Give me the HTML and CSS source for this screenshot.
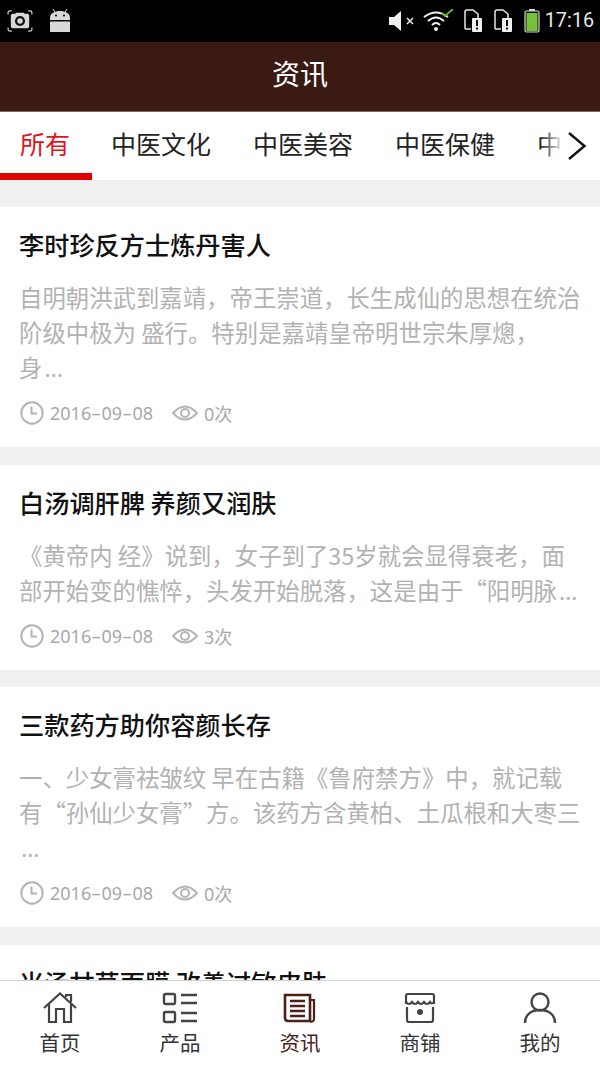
FILE: index.html
```html
<!DOCTYPE html>
<html lang="zh">
<head>
<meta charset="utf-8">
<title>资讯</title>
<link rel="stylesheet" href="styles.css">
</head>
<body>
<div class="app">
  <div class="status">
    <svg class="st-ic" width="26" height="22" viewBox="0 0 28 24"><g fill="none" stroke="#d8d8d8" stroke-width="1.300"><path d="M1 5V2.500Q1 1 3 1H5M23 1H25Q27 1 27 3V5M1 19V21Q1 23 3 23H5M23 23H25Q27 23 27 21V19"/></g><path d="M4 6Q4 4 6 4H9L10 3H18L19 4H22Q24 4 24 6V18Q24 20 22 20H6Q4 20 4 18Z" fill="#d8d8d8"/><circle cx="14" cy="12" r="5.500" fill="#111"/><circle cx="14" cy="12" r="3" fill="#d8d8d8"/></svg>
    <svg class="st-ic st-and" width="20" height="24" viewBox="0 0 20 24"><path d="M0 9C0 4 5 2 10 2S20 4 20 9V11H0Z" fill="#d8d8d8"/><path d="M3 0L5 3M17 0L15 3" stroke="#d8d8d8" stroke-width="1"/><circle cx="6" cy="6.500" r="1" fill="#000"/><circle cx="14" cy="6.500" r="1" fill="#000"/><rect y="12.500" width="20" height="10.500" fill="#d8d8d8"/></svg>
    <div class="st-right">
      <svg width="26" height="24" viewBox="0 0 26 24"><path d="M0 8H5L12 2V22L5 16H0Z" fill="#f0f0f0"/><path d="M18 9L24 15M24 9L18 15" stroke="#f0f0f0" stroke-width="1.500"/></svg>
      <svg class="st-wifi" width="32" height="24" viewBox="0 0 32 24"><g fill="none" stroke="#f0f0f0" stroke-width="2"><path d="M1 8Q13 -1 25 8"/><path d="M5 12Q13 5 21 12"/><path d="M9 16Q13 12 17 16"/></g><circle cx="13" cy="20" r="2" fill="#f0f0f0"/><path d="M19 4L22 7L30 0" fill="none" stroke="#5cb531" stroke-width="2"/></svg>
      <svg class="st-sim" width="20" height="24" viewBox="0 0 20 24"><path d="M1 20V3Q1 1 3 1H9L14 5V9" fill="none" stroke="#e8e8e8" stroke-width="1.500"/><path d="M1 20H7" stroke="#e8e8e8" stroke-width="1.500"/><rect x="8" y="9" width="10" height="14" rx="1" fill="#f0f0f0"/><rect x="12" y="11" width="2" height="6" fill="#111"/><rect x="12" y="18.500" width="2" height="2" fill="#111"/></svg>
      <svg class="st-sim" width="20" height="24" viewBox="0 0 20 24"><path d="M1 20V3Q1 1 3 1H9L14 5V9" fill="none" stroke="#e8e8e8" stroke-width="1.500"/><path d="M1 20H7" stroke="#e8e8e8" stroke-width="1.500"/><rect x="8" y="9" width="10" height="14" rx="1" fill="#f0f0f0"/><rect x="12" y="11" width="2" height="6" fill="#111"/><rect x="12" y="18.500" width="2" height="2" fill="#111"/></svg>
      <svg class="st-bat" width="16" height="24" viewBox="0 0 16 24"><rect x="5" y="0" width="6" height="3" fill="#d8d8d8"/><rect x="1" y="2" width="14" height="21" rx="1.500" fill="#111" stroke="#d8d8d8" stroke-width="1.200"/><rect x="2.500" y="4" width="11" height="18" fill="#74c23c"/></svg>
      <span class="st-time">17:16</span>
    </div>
  </div>
  <header class="top">资讯</header>
  <nav class="tabs">
    <span class="tab tab-on">所有</span>
    <span class="tab">中医文化</span>
    <span class="tab">中医美容</span>
    <span class="tab">中医保健</span>
    <span class="tab tab-cut">中</span>
    <div class="tab-more">
      <svg width="20" height="30" viewBox="0 0 20 30"><path d="M1 2L16.500 15L1 28" fill="none" stroke="#111" stroke-width="2.400"/></svg>
    </div>
  </nav>
  <main class="list">
    <article class="card">
      <h2 class="c-title">李时珍反方士炼丹害人</h2>
      <p class="c-text">自明朝洪武到嘉靖，帝王崇道，长生成仙的思想在统治<br>阶级中极为 盛行。特别是嘉靖皇帝明世宗朱厚熜，<br>身<span class="dots">…</span></p>
      <div class="c-meta">
        <svg class="m-clock" width="24" height="24" viewBox="0 0 24 24"><circle cx="12" cy="12" r="10.700" fill="none" stroke="#b4b4b4" stroke-width="2"/><path d="M11.500 5.500V12.500H17" fill="none" stroke="#b4b4b4" stroke-width="2"/></svg>
        <span class="m-date">2016<span class="dash">-</span>09<span class="dash">-</span>08</span>
        <svg class="m-eye" width="26" height="20" viewBox="0 0 26 20"><path d="M1 10Q13 -3 25 10Q13 23 1 10Z" fill="none" stroke="#b4b4b4" stroke-width="2"/><circle cx="13" cy="10" r="4" fill="none" stroke="#b4b4b4" stroke-width="2"/></svg>
        <span class="m-count">0次</span>
      </div>
    </article>
    <article class="card">
      <h2 class="c-title">白汤调肝脾 养颜又润肤</h2>
      <p class="c-text">《黄帝内 经》说到，女子到了35岁就会显得衰老，面<br>部开始变的憔悴，头发开始脱落，这是由于“阳明脉<span class="dots">…</span></p>
      <div class="c-meta">
        <svg class="m-clock" width="24" height="24" viewBox="0 0 24 24"><circle cx="12" cy="12" r="10.700" fill="none" stroke="#b4b4b4" stroke-width="2"/><path d="M11.500 5.500V12.500H17" fill="none" stroke="#b4b4b4" stroke-width="2"/></svg>
        <span class="m-date">2016<span class="dash">-</span>09<span class="dash">-</span>08</span>
        <svg class="m-eye" width="26" height="20" viewBox="0 0 26 20"><path d="M1 10Q13 -3 25 10Q13 23 1 10Z" fill="none" stroke="#b4b4b4" stroke-width="2"/><circle cx="13" cy="10" r="4" fill="none" stroke="#b4b4b4" stroke-width="2"/></svg>
        <span class="m-count">3次</span>
      </div>
    </article>
    <article class="card">
      <h2 class="c-title">三款药方助你容颜长存</h2>
      <p class="c-text">一、少女膏祛皱纹 早在古籍《鲁府禁方》中，就记载<br>有“孙仙少女膏”方。该药方含黄柏、土瓜根和大枣三<br><span class="dots">…</span></p>
      <div class="c-meta">
        <svg class="m-clock" width="24" height="24" viewBox="0 0 24 24"><circle cx="12" cy="12" r="10.700" fill="none" stroke="#b4b4b4" stroke-width="2"/><path d="M11.500 5.500V12.500H17" fill="none" stroke="#b4b4b4" stroke-width="2"/></svg>
        <span class="m-date">2016<span class="dash">-</span>09<span class="dash">-</span>08</span>
        <svg class="m-eye" width="26" height="20" viewBox="0 0 26 20"><path d="M1 10Q13 -3 25 10Q13 23 1 10Z" fill="none" stroke="#b4b4b4" stroke-width="2"/><circle cx="13" cy="10" r="4" fill="none" stroke="#b4b4b4" stroke-width="2"/></svg>
        <span class="m-count">0次</span>
      </div>
    </article>
    <article class="card">
      <h2 class="c-title">米汤甘草面膜 改善过敏皮肤</h2>
    </article>
  </main>
  <footer class="bar">
    <div class="b-item">
      <svg width="36" height="32" viewBox="0 0 36 32"><path d="M2 16L18 1.500L34 16M7 12V30H14V17H22V30H29V12M24 5V3H29V10" fill="none" stroke="#444" stroke-width="2.200"/></svg>
      <span>首页</span>
    </div>
    <div class="b-item">
      <svg width="36" height="32" viewBox="0 0 36 32"><g fill="none" stroke="#444" stroke-width="2.400"><rect x="2" y="2" width="11" height="10" rx="1.500"/><rect x="2" y="20" width="11" height="10" rx="1.500"/><path d="M19 3H35M19 11H35M19 21H35M19 29H35"/></g></svg>
      <span>产品</span>
    </div>
    <div class="b-item b-on">
      <svg width="36" height="32" viewBox="0 0 36 32"><path d="M3 3H28V29H6Q3 29 3 26Z" fill="none" stroke="#4c201a" stroke-width="2.600"/><path d="M28 8H32V27Q32 30 28 29.500" fill="none" stroke="#4c201a" stroke-width="2.200"/><path d="M8 9H23M8 14H23M8 19H23M8 24H23" stroke="#4c201a" stroke-width="2.400"/></svg>
      <span>资讯</span>
    </div>
    <div class="b-item">
      <svg width="36" height="32" viewBox="0 0 36 32"><g fill="none" stroke="#444" stroke-width="2.200"><path d="M5 15V28Q5 30 7 30H29Q31 30 31 28V15"/><path d="M4 12V4Q4 2 6 2H30Q32 2 32 4V12"/><path d="M4 10Q7 14 10 10Q13 14 16 10Q19 14 22 10Q25 14 28 10Q30 13 32 10"/></g><circle cx="18" cy="20" r="3" fill="#444"/></svg>
      <span>商铺</span>
    </div>
    <div class="b-item">
      <svg width="36" height="32" viewBox="0 0 36 32"><g fill="none" stroke="#444" stroke-width="2.400"><circle cx="18" cy="10" r="8.500"/><path d="M3 31C3 22 10 18 18 18S33 22 33 31"/></g></svg>
      <span>我的</span>
    </div>
  </footer>
</div>
</body>
</html>
```
FILE: styles.css
```css
* { box-sizing: border-box; margin: 0; padding: 0; }
html, body { width: 600px; height: 1067px; overflow: hidden; }
body { font-family: "Noto Sans CJK SC", "Noto Sans", sans-serif; background: #f0f0f0; }
.app { width: 600px; height: 1067px; position: relative; overflow: hidden; display: flex; flex-direction: column; }
.status { height: 42px; flex: none; background: #000; display: flex; align-items: center; padding: 0 6px 0 7px; }
.st-and { margin-left: 17px; }
.st-ic { display: block; }
.st-right { margin-left: auto; display: flex; align-items: center; }
.st-right svg { display: block; }
.st-wifi { margin-left: 8px; }
.st-sim { margin-left: 9px; }
.st-sim + .st-sim { margin-left: 10px; }
.st-bat { margin-left: 10px; }
.st-time { margin-left: 5px; color: #e8e8e8; font: 19.800px/24px Roboto, sans-serif; }
.top { height: 70px; flex: none; background: #3a1a12; border-bottom: 1px solid #7c6660; color: #fff; font-size: 28px; line-height: 63px; text-align: center; }
.tabs { height: 68px; flex: none; background: #fff; display: flex; position: relative; overflow: hidden; }
.tab { flex: none; width: 142px; text-align: center; font-size: 25px; line-height: 63px; color: #222; height: 68px; white-space: nowrap; }
.tab-on { width: 92px; color: #e0141c; border-bottom: 7px solid #e00000; padding-right: 2px; margin-right: -2px; }
.tab-cut { width: 62px; padding-left: 21px; text-align: left; }
.tab-more { position: absolute; right: 0; top: 0; width: 60px; height: 68px; background: linear-gradient(90deg, rgba(255,255,255,0), #fff 40%); display: flex; align-items: center; justify-content: flex-end; padding-right: 12px; }
.list { padding-top: 27px; display: flex; flex-direction: column; gap: 17.500px; }
.card { background: #fff; padding: 19px 20px 0 19px; }
.c-title { font-size: 25.200px; font-weight: 500; line-height: 36px; color: #111; white-space: nowrap; }
.c-text { margin-top: 18px; font-size: 23.400px; line-height: 35px; color: #b2b2b2; white-space: nowrap; }
.dots { font-family: "Noto Sans", sans-serif; margin-left: 2px; line-height: 0; }
.c-meta { height: 24px; margin: 16px 0 22px 1px; display: flex; align-items: center; }
.c-meta span { font-family: "Noto Sans", "Noto Sans CJK SC", sans-serif; font-size: 18px; color: #a8a8a8; }
.dash { display: inline-block; width: 10.300px; text-align: center; transform: scaleX(1.700); }
.m-date { margin-left: 6px; }
.m-eye { margin-left: 19px; }
.m-count { margin-left: 6px; }
.bar { position: absolute; left: 0; right: 0; bottom: 0; height: 87px; background: #fff; border-top: 1px solid #d0d0d0; display: flex; }
.b-item { flex: 1; display: flex; flex-direction: column; align-items: center; padding-top: 11px; font-size: 20.500px; line-height: 30px; color: #333; }
.b-item svg { display: block; margin-bottom: 3px; }
.b-on { color: #4c201a; }
```
